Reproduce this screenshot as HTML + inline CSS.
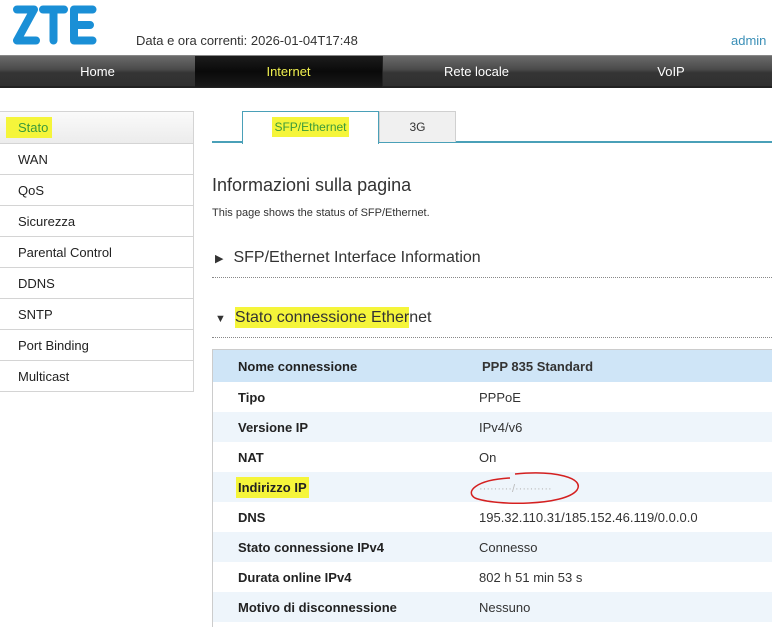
<!DOCTYPE html>
<html><head><meta charset="utf-8"><style>
*{margin:0;padding:0;box-sizing:border-box}
body{width:772px;height:627px;overflow:hidden;background:#fff;font-family:"Liberation Sans",sans-serif;position:relative;color:#222}
.abs{position:absolute}
.nav{top:55px;left:0;width:772px;height:33px;background:linear-gradient(#6a6a6a 0%,#4a4a4a 45%,#353535 55%,#303030 100%);border-top:1px solid #888;border-bottom:2px solid #222}
.nav div{position:absolute;top:0;height:31px;line-height:31px;text-align:center;color:#fff;font-size:13px}
.side{left:0;top:111px;width:194px;border:1px solid #d4d4d4;border-left:none}
.side div{height:31px;line-height:31px;padding-left:18px;font-size:13px;border-top:1px solid #d4d4d4;color:#222}
.side div:first-child{border-top:none;background:linear-gradient(#fafafa,#ececec);color:#3a9a3a}
.hl{background:#f5f53a}
table{border-collapse:collapse;width:560px}
td{height:30px;font-size:13px}
tr:nth-child(odd){background:#eef5fb}
td.l{padding-left:25px;width:266px;font-weight:bold;color:#222}
td.v{color:#333}
</style></head><body>
<svg class="abs" style="left:13px;top:5px" width="84" height="40" viewBox="0 0 84 40">
<g fill="none" stroke="#1a8fd6" stroke-width="8" stroke-linejoin="round" stroke-linecap="round">
<path d="M4 4.5 H21 L4 35.5 H23"/>
<path d="M30 4.5 H51 M40.5 4.5 V35.5"/>
<path d="M79.5 4.5 H61 V35.5 H79.5 M61 20 H77"/>
</g></svg>
<div class="abs" style="left:136px;top:33px;font-size:13px;color:#333">Data e ora correnti: 2026-01-04T17:48</div>
<div class="abs" style="left:731px;top:33px;font-size:13px;color:#3a8fb7">admin</div>
<div class="abs nav">
<div style="left:0;width:195px">Home</div>
<div style="left:195px;width:187px;background:linear-gradient(#1c1c1c,#0a0a0a 50%,#1a1a1a);color:#f0f050">Internet</div>
<div style="left:382px;width:188px;border-left:1px solid #222">Rete locale</div>
<div style="left:570px;width:202px">VoIP</div>
</div>
<div class="abs side">
<div><span class="hl" style="margin-left:-12px;padding:3px 4px 3px 12px">Stato</span></div>
<div>WAN</div><div>QoS</div><div>Sicurezza</div><div>Parental Control</div><div>DDNS</div><div>SNTP</div><div>Port Binding</div><div>Multicast</div>
</div>
<div class="abs" style="left:212px;top:141px;width:560px;height:2px;background:#4aa0b8"></div>
<div class="abs" style="left:242px;top:111px;width:137px;height:33px;border:1px solid #4aa0b8;border-bottom:none;background:#fff;text-align:center;line-height:31px;font-size:12px;color:#3a9a3a"><span class="hl" style="padding:3px 2px">SFP/Ethernet</span></div>
<div class="abs" style="left:379px;top:111px;width:77px;height:31px;border:1px solid #d0d0d0;border-bottom:none;background:#f0f0f0;text-align:center;line-height:31px;font-size:12px;color:#333">3G</div>
<div class="abs" style="left:212px;top:175px;font-size:18px;color:#333">Informazioni sulla pagina</div>
<div class="abs" style="left:212px;top:207px;font-size:11px;color:#333">This page shows the status of SFP/Ethernet.</div>
<div class="abs" style="left:212px;top:249px;width:560px;height:29px;border-bottom:1px dotted #888;font-size:16px;color:#333"><span style="font-size:11px;margin:0 10px 0 3px">▶</span>SFP/Ethernet Interface Information</div>
<div class="abs" style="left:212px;top:309px;width:560px;height:29px;border-bottom:1px dotted #888;font-size:16px;color:#333"><span style="font-size:11px;margin:0 9px 0 3px">▼</span><span class="hl" style="padding:2px 0">Stato connessione Ether</span>net</div>
<div class="abs" style="left:212px;top:349px;width:560px;height:278px;border-left:1px solid #ccc;border-top:1px solid #ccc">
<table>
<tr style="background:#cfe5f7"><td class="l" style="height:32px">Nome connessione</td><td class="v" style="font-weight:bold;padding-left:3px">PPP 835 Standard</td></tr>
<tr><td class="l">Tipo</td><td class="v">PPPoE</td></tr>
<tr><td class="l">Versione IP</td><td class="v">IPv4/v6</td></tr>
<tr><td class="l">NAT</td><td class="v">On</td></tr>
<tr><td class="l"><span class="hl" style="padding:3px 2px;margin-left:-2px">Indirizzo IP</span></td><td class="v"><span style="color:#bbb;font-size:11px">·········/··········</span></td></tr>
<tr><td class="l">DNS</td><td class="v">195.32.110.31/185.152.46.119/0.0.0.0</td></tr>
<tr><td class="l">Stato connessione IPv4</td><td class="v">Connesso</td></tr>
<tr><td class="l">Durata online IPv4</td><td class="v">802 h 51 min 53 s</td></tr>
<tr><td class="l">Motivo di disconnessione</td><td class="v">Nessuno</td></tr>
</table></div>
<svg class="abs" style="left:465px;top:468px" width="125" height="40"><path d="M50 6 C90 2 120 10 112 22 C100 38 30 38 10 30 C0 24 10 12 45 10" fill="none" stroke="#d42020" stroke-width="1.5"/></svg>
</body></html>
